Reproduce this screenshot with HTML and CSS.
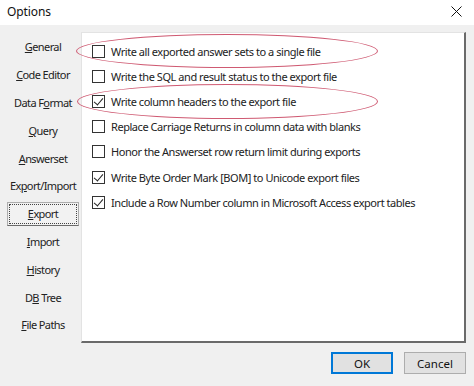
FILE: index.html
```html
<!DOCTYPE html>
<html lang="en">
<head>
  <meta charset="UTF-8" />
  <title>Options</title>
  <link rel="stylesheet" href="styles.css">
</head>
<body>
  <div class="dialog">
    <header class="titlebar">
      <span class="title">Options</span>
      <svg class="close" width="11" height="11" viewBox="0 0 11 11">
        <path d="M0.5 0.5 L10.5 10.5 M10.5 0.5 L0.5 10.5" stroke="#111" stroke-width="1" fill="none"/>
      </svg>
    </header>

    <div class="main">
      <nav class="tabs">
        <div class="tab"><u>G</u>eneral</div>
        <div class="tab"><u>C</u>ode Editor</div>
        <div class="tab">Data F<u>o</u>rmat</div>
        <div class="tab"><u>Q</u>uery</div>
        <div class="tab"><u>A</u>nswerset</div>
        <div class="tab">Ex<u>p</u>ort/Import</div>
        <div class="tab active"><span class="focus"><u>E</u>xport</span></div>
        <div class="tab"><u>I</u>mport</div>
        <div class="tab"><u>H</u>istory</div>
        <div class="tab">D<u>B</u>&nbsp;Tree</div>
        <div class="tab"><u>F</u>ile Paths</div>
      </nav>

      <section class="panel">
        <label class="opt"><span class="box"></span>Write all exported answer sets to a single file</label>
        <label class="opt"><span class="box"></span>Write the SQL and result status to the export file</label>
        <label class="opt"><span class="box checked"></span>Write column headers to the export file</label>
        <label class="opt"><span class="box"></span>Replace Carriage Returns in column data with blanks</label>
        <label class="opt"><span class="box"></span>Honor the Answerset row return limit during exports</label>
        <label class="opt"><span class="box checked"></span>Write Byte Order Mark [BOM] to Unicode export files</label>
        <label class="opt"><span class="box checked"></span>Include a Row Number column in Microsoft Access export tables</label>
      </section>
    </div>

    <footer class="buttons">
      <button class="btn default">OK</button>
      <button class="btn">Cancel</button>
    </footer>

    <div class="ring ring-one"></div>
    <div class="ring ring-two"></div>
  </div>
</body>
</html>
```

FILE: styles.css
```css
body {
  margin: 0;
  font-family: 'Noto Sans', sans-serif;
  font-size: 11px;
  color: #222;
  background: #f0f0f0;
}

.dialog {
  position: relative;
  width: 474px;
  height: 386px;
  background: #f0f0f0;
  overflow: hidden;
}

.titlebar {
  height: 25px;
  background: #fff;
  display: flex;
  align-items: center;
  justify-content: space-between;
  padding: 0 12px 2px 7px;
  box-sizing: border-box;
}

.title {
  font-size: 12px;
  letter-spacing: -0.1px;
  color: #111;
}

.main {
  display: flex;
  padding: 7px 8px 0 7px;
}

.tabs {
  width: 74px;
  padding-top: 1px;
}

.tab {
  height: 27.8px;
  display: flex;
  align-items: center;
  justify-content: center;
  padding-right: 2px;
  white-space: nowrap;
  letter-spacing: -0.6px;
}

.tab.active {
  height: 24px;
  margin: 2px 2px 1.8px 0;
  padding: 0;
  background: #f2f2f2;
  border: 1px solid #adadad;
  border-bottom-color: #6b6b6b;
  box-sizing: border-box;
}

.focus {
  flex: 1;
  align-self: stretch;
  margin: 1px;
  border: 1px dotted #444;
  display: flex;
  align-items: center;
  justify-content: center;
}

.panel {
  width: 385px;
  height: 311px;
  box-sizing: border-box;
  background: #fff;
  border-top: 1px solid #e3e3e3;
  border-left: 1px solid #e3e3e3;
  border-right: 2px solid #6a6a6a;
  border-bottom: 2px solid #6a6a6a;
  padding: 5.5px 0 0 10px;
}

.opt {
  height: 25.2px;
  display: flex;
  align-items: center;
  gap: 6px;
  white-space: nowrap;
  letter-spacing: -0.45px;
}

.box {
  width: 13px;
  height: 13px;
  box-sizing: border-box;
  border: 1px solid #333;
  background: #fff;
  flex: none;
  position: relative;
}

.box.checked::after {
  content: "";
  position: absolute;
  left: 3px;
  top: 0px;
  width: 4px;
  height: 8px;
  border-right: 1.2px solid #222;
  border-bottom: 1.2px solid #222;
  transform: rotate(40deg);
}

.buttons {
  display: flex;
  justify-content: flex-end;
  gap: 11px;
  padding: 9px 8px 0 0;
}

.btn {
  width: 62px;
  height: 22px;
  font-family: 'Noto Sans', sans-serif;
  font-size: 11.5px;
  color: #111;
  background: #e1e1e1;
  border: 1px solid #adadad;
  padding: 0;
}

.btn.default {
  border: 1px solid #0078d7;
  box-shadow: inset 0 0 0 1px #0078d7;
}

.ring {
  position: absolute;
  border: 1.5px solid #cf5a72;
  border-radius: 50%;
  box-sizing: border-box;
}

.ring-one {
  left: 76px;
  top: 34px;
  width: 302px;
  height: 34px;
}

.ring-two {
  left: 77px;
  top: 84px;
  width: 301px;
  height: 35px;
}
```
